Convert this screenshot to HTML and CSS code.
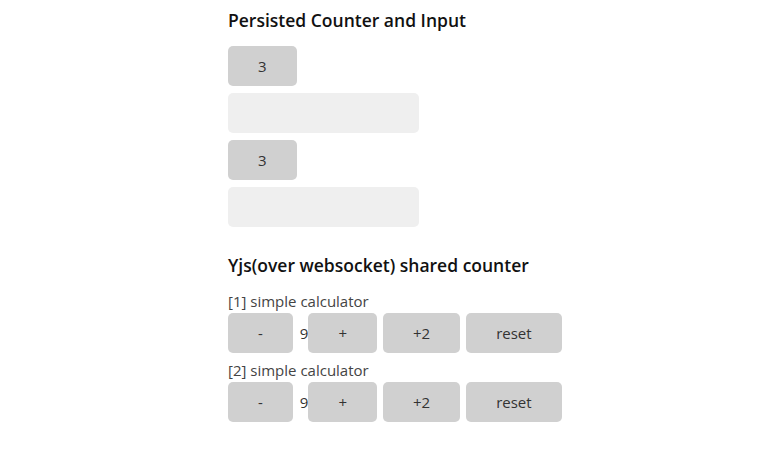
FILE: index.html
```html
<!DOCTYPE html>
<html lang="en">
<head>
    <meta charset="UTF-8">
    <meta name="viewport" content="width=device-width, initial-scale=1.0">
    <link rel="stylesheet" href="styles.css">
    <title>Persisted Counter and Input</title>
</head>
<body>
    <div class="app">
        <section class="persisted">
            <h2>Persisted Counter and Input</h2>
            <button class="btn">3</button>
            <input class="field" type="text">
            <button class="btn">3</button>
            <input class="field" type="text">
        </section>

        <section class="shared">
            <h2>Yjs(over websocket) shared counter</h2>
            <div class="calc">
                <p class="calc-title">[1] simple calculator</p>
                <div class="calc-row">
                    <button class="btn">-</button>
                    <span class="count">9</span>
                    <button class="btn">+</button>
                    <button class="btn">+2</button>
                    <button class="btn">reset</button>
                </div>
            </div>
            <div class="calc">
                <p class="calc-title">[2] simple calculator</p>
                <div class="calc-row">
                    <button class="btn">-</button>
                    <span class="count">9</span>
                    <button class="btn">+</button>
                    <button class="btn">+2</button>
                    <button class="btn">reset</button>
                </div>
            </div>
        </section>
    </div>
</body>
</html>
```

FILE: styles.css
```css
body {
    margin: 0;
    background: #fff;
    color: #222;
    font-family: 'Open Sans', 'Noto Sans', sans-serif;
}

.app {
    width: 309px;
    margin: 0 auto;
}

h2 {
    margin: 0;
    font-size: 17.5px;
    font-weight: 600;
    color: #111;
    white-space: nowrap;
}

.persisted {
    display: flex;
    flex-direction: column;
    align-items: flex-start;
    gap: 7px;
    padding-top: 8px;
}

.persisted h2 {
    margin-bottom: 7px;
}

.btn {
    flex: none;
    height: 40px;
    padding: 0 30px;
    border: none;
    border-radius: 5px;
    background-color: #d0d0d0;
    color: #333;
    font-family: inherit;
    font-size: 15px;
    cursor: pointer;
}

.field {
    width: 191px;
    height: 40px;
    box-sizing: border-box;
    border: none;
    border-radius: 5px;
    background-color: #efefef;
}

.shared {
    padding-top: 26px;
}

.shared h2 {
    margin-bottom: 14px;
}

.calc-title {
    margin: 0 0 2px;
    font-size: 15px;
    line-height: 20px;
    color: #444;
    white-space: nowrap;
}

.calc-row {
    display: flex;
    align-items: center;
    margin-bottom: 7px;
}

.calc-row .btn {
    margin-right: 6px;
}

.count {
    flex: none;
    margin-left: 1px;
    font-size: 15px;
    color: #333;
}
```
